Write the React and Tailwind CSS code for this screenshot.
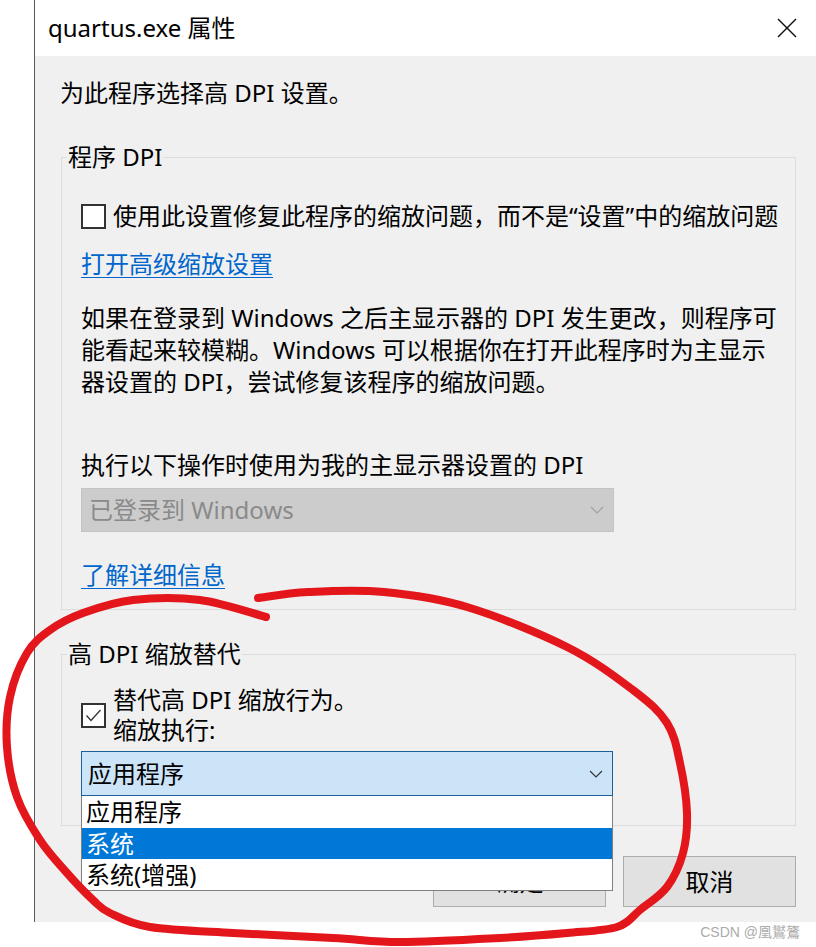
import React from "react";

const redPts = [
  [258, 598], [308, 592], [384, 592], [467, 607], [567, 647], [633, 690], [667, 723],
  [680, 763], [687, 813], [683, 853], [667, 887], [640, 910], [617, 927], [567, 933],
  [500, 938], [400, 942], [333, 938], [233, 933], [150, 927], [110, 913], [93, 900],
  [67, 873], [40, 840], [17, 797], [7, 747], [10, 697], [27, 653], [50, 630], [83, 613],
  [133, 600], [200, 600], [266, 617],
];

function smoothPath(p) {
  let d = `M${p[0][0]},${p[0][1]}`;
  for (let i = 0; i < p.length - 1; i++) {
    const p0 = p[i - 1] || p[i];
    const p1 = p[i];
    const p2 = p[i + 1];
    const p3 = p[i + 2] || p2;
    const c1 = [p1[0] + (p2[0] - p0[0]) / 6, p1[1] + (p2[1] - p0[1]) / 6];
    const c2 = [p2[0] - (p3[0] - p1[0]) / 6, p2[1] - (p3[1] - p1[1]) / 6];
    d += ` C${c1[0].toFixed(1)},${c1[1].toFixed(1)} ${c2[0].toFixed(1)},${c2[1].toFixed(1)} ${p2[0]},${p2[1]}`;
  }
  return d;
}

function Chevron({ color }) {
  return (
    <svg width="14" height="8" viewBox="0 0 14 8" fill="none">
      <polyline points="1,1 7,7 13,1" stroke={color} strokeWidth="1.2" />
    </svg>
  );
}

function CheckBox({ checked }) {
  return (
    <div className="w-[25px] h-[25px] shrink-0 border-2 border-[#333333] bg-white flex items-center justify-center">
      {checked && (
        <svg width="19" height="19" viewBox="0 0 19 19" fill="none">
          <polyline points="2.5,9.5 7,14.5 16.5,4" stroke="#333333" strokeWidth="1.3" />
        </svg>
      )}
    </div>
  );
}

export default function App() {
  return (
    <div className="relative w-[816px] h-[947px] bg-white overflow-hidden font-['Noto_Sans','Noto_Sans_CJK_SC',sans-serif] text-[24px] leading-[32px] text-black">
      <div className="flex h-[922px]">
        <div className="w-[34px] shrink-0 bg-white" />
        <div className="flex-1 flex flex-col border-l border-[#5a5a5a]">
          {/* Title bar */}
          <div className="h-[56px] bg-white flex items-center justify-between pl-[13px] pr-[18px]">
            <span className="whitespace-nowrap">quartus.exe 属性</span>
            <svg width="22" height="22" viewBox="0 0 22 22" fill="none">
              <line x1="2" y1="2" x2="20" y2="20" stroke="#111" strokeWidth="1.5" />
              <line x1="20" y1="2" x2="2" y2="20" stroke="#111" strokeWidth="1.5" />
            </svg>
          </div>

          {/* Body */}
          <div className="flex-1 bg-[#f0f0f0] pl-[25px] pr-[20px] pt-[21px] flex flex-col">
            <div className="whitespace-nowrap">为此程序选择高 DPI 设置。</div>

            <fieldset className="mt-[32px] ml-[1px] border border-[#dcdcdc] p-0 m-0">
              <legend className="ml-[5px] px-[1px] leading-[32px]">程序 DPI</legend>
              <div className="pl-[19px] pr-[10px] pt-[27px] pb-[18px] flex flex-col">
                <div className="flex items-center gap-[7px] whitespace-nowrap">
                  <CheckBox checked={false} />
                  <span>使用此设置修复此程序的缩放问题，而不是“设置”中的缩放问题</span>
                </div>
                <div className="mt-[16px]">
                  <span className="text-[#0066cc] underline underline-offset-[4px] decoration-1">打开高级缩放设置</span>
                </div>
                <div className="mt-[22px] whitespace-nowrap">
                  <div>如果在登录到 Windows 之后主显示器的 DPI 发生更改，则程序可</div>
                  <div>能看起来较模糊。Windows 可以根据你在打开此程序时为主显示</div>
                  <div>器设置的 DPI，尝试修复该程序的缩放问题。</div>
                </div>
                <div className="mt-[51px] whitespace-nowrap">执行以下操作时使用为我的主显示器设置的 DPI</div>
                <div className="mt-[7px] w-[533px] h-[44px] bg-[#cccccc] border border-[#c4c4c4] flex items-center justify-between pl-[7px] pr-[9px]">
                  <span className="text-[#8a8a8a] whitespace-nowrap">已登录到 Windows</span>
                  <Chevron color="#a0a0a0" />
                </div>
                <div className="mt-[27px]">
                  <span className="text-[#0066cc] underline underline-offset-[4px] decoration-1">了解详细信息</span>
                </div>
              </div>
            </fieldset>

            <fieldset className="mt-[28px] ml-[1px] border border-[#dcdcdc] p-0 m-0">
              <legend className="ml-[5px] px-[1px] leading-[32px]">高 DPI 缩放替代</legend>
              <div className="pl-[19px] pr-[10px] pt-[15px] pb-[29px] flex flex-col">
                <div className="flex items-center gap-[7px] whitespace-nowrap">
                  <CheckBox checked={true} />
                  <div className="leading-[30px]">
                    <div>替代高 DPI 缩放行为。</div>
                    <div>缩放执行:</div>
                  </div>
                </div>
                <div className="relative mt-[6px] w-[532px]">
                  <div className="h-[45px] bg-[#cce4f7] border border-[#1f5f99] flex items-center justify-between pl-[6px] pr-[9px]">
                    <span className="whitespace-nowrap">应用程序</span>
                    <Chevron color="#333333" />
                  </div>
                  <div className="absolute left-0 top-full w-full z-10 bg-white border border-[#7f7f7f] border-t-0 flex flex-col">
                    <div className="h-[32px] flex items-center pl-[4px] whitespace-nowrap">应用程序</div>
                    <div className="h-[31px] flex items-center pl-[4px] bg-[#0078d7] text-white whitespace-nowrap">系统</div>
                    <div className="h-[31px] flex items-center pl-[4px] whitespace-nowrap">系统(增强)</div>
                  </div>
                </div>
              </div>
            </fieldset>

            <div className="mt-[30px] flex justify-end gap-[17px]">
              <div className="w-[173px] h-[51px] bg-[#e1e1e1] border border-[#adadad] flex items-center justify-center">确定</div>
              <div className="w-[173px] h-[51px] bg-[#e1e1e1] border border-[#adadad] flex items-center justify-center">取消</div>
            </div>
          </div>
        </div>
      </div>

      <svg className="absolute inset-0 pointer-events-none z-20" width="816" height="947" viewBox="0 0 816 947">
        <path d={smoothPath(redPts)} fill="none" stroke="#e3161b" strokeWidth="8" strokeLinecap="round" strokeLinejoin="round" />
      </svg>

      <div className="absolute right-[16px] bottom-[7px] z-30 text-[14px] leading-[16px] text-[#ababab] font-['Liberation_Sans','Noto_Sans_CJK_SC',sans-serif] whitespace-nowrap">
        CSDN @凰鸑鷟
      </div>
    </div>
  );
}
